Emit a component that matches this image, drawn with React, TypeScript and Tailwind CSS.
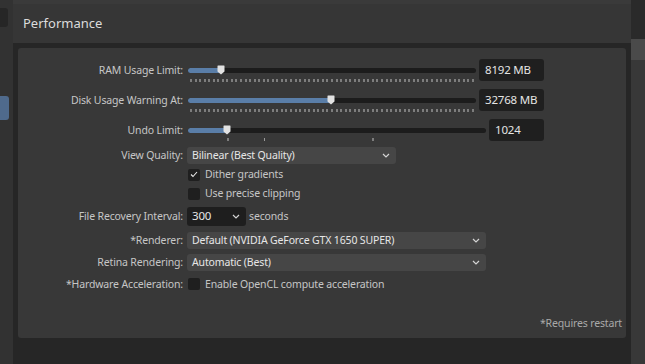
import React from "react";

const font = { fontFamily: '"Noto Sans", "Open Sans", sans-serif' };

const Chevron = () => (
  <svg width="8" height="5" viewBox="0 0 8 5" className="shrink-0">
    <path d="M1 1 L4 4 L7 1" fill="none" stroke="#d4d4d4" strokeWidth="1.2" />
  </svg>
);

const Thumb = () => (
  <svg width="8" height="10" viewBox="0 0 8 10" className="absolute top-[-3px] -translate-x-1/2">
    <path d="M0.5 1 Q0.5 0.5 1 0.5 H7 Q7.5 0.5 7.5 1 V6.5 L4 9.5 L0.5 6.5 Z" fill="#e2e2e2" />
  </svg>
);

type SliderProps = { pct: number; value: string; ticks: "dense" | "sparse"; boxWide?: boolean };

const SliderRow = ({ label, pct, value, ticks, boxWide = true }: SliderProps & { label: string }) => (
  <div className="flex h-[30px] items-center">
    <div className="w-[165px] text-right text-[#c6c6c6]">{label}</div>
    <div className="ml-[5px] flex w-[356px] items-center">
      <div className="relative h-[5px] flex-1 rounded-full bg-[#1c1c1c]">
        <div className="h-full rounded-full bg-[#5a7ea8]" style={{ width: `${pct}%` }} />
        <div className="absolute top-0" style={{ left: `${pct}%` }}>
          <Thumb />
        </div>
        {ticks === "dense" ? (
          <div className="absolute left-[2px] right-[2px] top-[11px] flex justify-between">
            {Array.from({ length: 63 }).map((_, i) => (
              <div key={i} className="h-[3px] w-[2px] bg-[#7d7d7d]" />
            ))}
          </div>
        ) : (
          <div className="absolute left-0 right-0 top-[10px] h-[3px]">
            <div className="absolute left-[39px] h-[3px] w-[2px] bg-[#7d7d7d]" />
            <div className="absolute left-[76px] h-[3px] w-px bg-[#9a9a9a]" />
            <div className="absolute left-[184px] h-[3px] w-[2px] bg-[#7d7d7d]" />
          </div>
        )}
      </div>
      <div
        className={`ml-[3px] flex h-[22px] ${boxWide ? "w-[65px]" : "w-[55px]"} items-center rounded-[3px] bg-[#1f1f1f] pl-[6px] text-[11.5px] tracking-[-0.2px] text-[#e4e4e4]`}
      >
        {value}
      </div>
    </div>
  </div>
);

const Select = ({ text, w, dark = false }: { text: string; w: string; dark?: boolean }) => (
  <div
    className={`flex items-center justify-between rounded-[3px] pl-[5px] pr-[6px] text-[#e6e6e6] ${w} ${
      dark ? "h-[19px] bg-[#1e1e1e] text-[11.5px]" : "h-[17px] bg-[#464646]"
    }`}
  >
    <span>{text}</span>
    <Chevron />
  </div>
);

const Check = ({ checked }: { checked?: boolean }) => (
  <div className="ml-[1px] flex h-[12px] w-[12px] items-center justify-center rounded-[2px] bg-[#1f1f1f]">
    {checked && (
      <svg width="8" height="7" viewBox="0 0 8 7">
        <path d="M1 3.5 L3 5.5 L7 1" fill="none" stroke="#e8e8e8" strokeWidth="1.1" />
      </svg>
    )}
  </div>
);

const Row = ({ label, h, children }: { label: string; h: string; children?: React.ReactNode }) => (
  <div className={`flex items-center ${h}`}>
    <div className="w-[165px] text-right text-[#c6c6c6]">{label}</div>
    <div className="ml-[4px] flex items-center gap-[5px] text-[#c6c6c6]">{children}</div>
  </div>
);

export default function App() {
  return (
    <div
      className="flex h-[364px] w-[645px] overflow-hidden bg-[#323232] text-[10.5px] leading-none tracking-[-0.15px]"
      style={font}
    >
      {/* left strip */}
      <div className="flex w-[13px] shrink-0 flex-col">
        <div className="mt-[8px] h-[19px] w-[8px] rounded-r-[3px] bg-[#262626]" />
        <div className="mt-[69px] h-[24px] w-[9px] rounded-r-[3px] bg-[#4f6a8c]" />
      </div>

      {/* main */}
      <div className="flex flex-1 flex-col">
        <div className="h-[4px] bg-[#3a3a3a]" />
        <div className="flex h-[39px] items-center bg-[#363636] pl-[10px] text-[13px] tracking-normal text-[#dcdcdc]">
          Performance
        </div>
        <div className="flex-1 bg-[#262626] px-[5px] pt-[5px]">
          <div className="flex h-[290px] flex-col rounded-[3px] bg-[#383838] pt-[7px]">
            <SliderRow label="RAM Usage Limit:" pct={11.5} value="8192 MB" ticks="dense" />
            <SliderRow label="Disk Usage Warning At:" pct={49.5} value="32768 MB" ticks="dense" />
            <SliderRow label="Undo Limit:" pct={13} value="1024" ticks="sparse" boxWide={false} />
            <Row label="View Quality:" h="h-[20px]">
              <Select text="Bilinear (Best Quality)" w="w-[209px]" />
            </Row>
            <Row label="" h="h-[19px]">
              <Check checked />
              <span>Dither gradients</span>
            </Row>
            <Row label="" h="h-[19px]">
              <Check />
              <span>Use precise clipping</span>
            </Row>
            <Row label="File Recovery Interval:" h="h-[26px]">
              <Select text="300" w="w-[59px]" dark />
              <span className="-ml-[2px]">seconds</span>
            </Row>
            <Row label="*Renderer:" h="h-[22px]">
              <Select text="Default (NVIDIA GeForce GTX 1650 SUPER)" w="w-[299px]" />
            </Row>
            <Row label="Retina Rendering:" h="h-[23px]">
              <Select text="Automatic (Best)" w="w-[299px]" />
            </Row>
            <Row label="*Hardware Acceleration:" h="h-[20px]">
              <Check />
              <span>Enable OpenCL compute acceleration</span>
            </Row>
            <div className="flex-1" />
            <div className="flex h-[20px] items-start justify-end pr-[4px] text-[#a9a9a9]">*Requires restart</div>
          </div>
        </div>
      </div>

      {/* right scrollbar */}
      <div className="flex w-[14px] shrink-0 flex-col">
        <div className="h-[39px] bg-[#2a2a2a]" />
        <div className="h-[21px] bg-[#4a4a4a]" />
        <div className="flex-1 bg-[#383838]" />
      </div>
    </div>
  );
}
